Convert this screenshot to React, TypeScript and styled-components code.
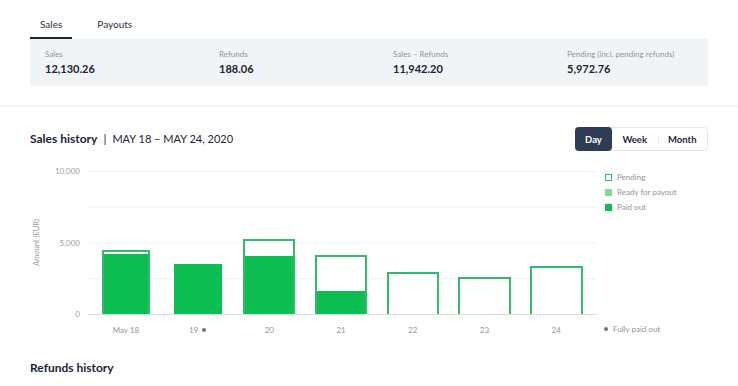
import React from "react";
import styled, { createGlobalStyle } from "styled-components";

const GlobalStyle = createGlobalStyle`
  body {
    margin: 0;
    background: #fff;
    font-family: Lato, "Noto Sans", sans-serif;
    color: #1b2335;
  }
`;

const GREEN = "#0dbf53";
const OUTLINE = "#33b96b";
const MAX = 10000;
const PLOT_H = 143;

type Day = { label: string; total: number; paid: number; w: number; dot?: boolean };

const days: Day[] = [
  { label: "May 18", total: 4480, paid: 4200, w: 48 },
  { label: "19", total: 3500, paid: 3500, w: 48, dot: true },
  { label: "20", total: 5280, paid: 4040, w: 52 },
  { label: "21", total: 4130, paid: 1610, w: 52 },
  { label: "22", total: 2920, paid: 0, w: 52 },
  { label: "23", total: 2570, paid: 0, w: 53 },
  { label: "24", total: 3340, paid: 0, w: 53 },
];

const stats = [
  { label: "Sales", value: "12,130.26" },
  { label: "Refunds", value: "188.06" },
  { label: "Sales – Refunds", value: "11,942.20" },
  { label: "Pending (incl. pending refunds)", value: "5,972.76" },
];

const Top = styled.div`
  padding: 0 30px;
  margin-bottom: 19px;
`;

const TabBar = styled.div`
  display: flex;
  gap: 15px;
`;

const Tab = styled.div<{ $active?: boolean }>`
  padding: 17px 10px 6px;
  font-size: 10px;
  line-height: 14px;
  color: #2a3142;
  border-bottom: 2px solid ${(p) => (p.$active ? "#1b2335" : "transparent")};
`;

const StatsPanel = styled.div`
  display: grid;
  grid-template-columns: repeat(4, 174px);
  padding: 10px 15px;
  background: #f1f4f7;
  border-radius: 0 0 3px 3px;
`;

const StatLabel = styled.div`
  font-size: 8px;
  line-height: 10px;
  color: #8d94a1;
  margin-bottom: 2px;
`;

const StatValue = styled.div`
  font-size: 11px;
  line-height: 15px;
  font-weight: 700;
  color: #1b2335;
`;

const Divider = styled.div`
  height: 2px;
  background: #f1f3f5;
`;

const Main = styled.div`
  padding: 20px 30px 0;
`;

const Header = styled.div`
  display: flex;
  justify-content: space-between;
  align-items: center;
`;

const Title = styled.h2`
  margin: 0;
  font-size: 12px;
  line-height: 16px;
  font-weight: 700;
  color: #1b2335;
`;

const Range = styled.span`
  font-weight: 400;
  font-size: 11px;
  &::before {
    content: "|";
    font-size: 12px;
    margin: 0 6px 0 6px;
  }
`;

const Segmented = styled.div`
  display: flex;
  align-items: stretch;
  height: 24px;
  box-sizing: border-box;
  border: 1px solid #e3e6eb;
  border-radius: 4px;
`;

const SegButton = styled.div<{ $active?: boolean; $sep?: boolean }>`
  position: relative;
  display: flex;
  align-items: center;
  padding: 0 ${(p) => (p.$active ? 10 : 10.5)}px;
  margin: ${(p) => (p.$active ? "-1px 0 -1px -1px" : "0")};
  font-size: 9.5px;
  font-weight: 700;
  border-radius: ${(p) => (p.$active ? "4px" : "0")};
  background: ${(p) => (p.$active ? "#2f3c56" : "transparent")};
  color: ${(p) => (p.$active ? "#fff" : "#1f2738")};
  &::before {
    content: "";
    display: ${(p) => (p.$sep ? "block" : "none")};
    position: absolute;
    left: 0;
    top: 7px;
    height: 9px;
    width: 1px;
    background: #e6e8ec;
  }
`;

const Chart = styled.div`
  display: grid;
  grid-template-columns: 12px 30px 509px 1fr;
  grid-template-rows: ${PLOT_H + 1}px auto;
  column-gap: 8px;
  margin-top: 20px;
`;

const AxisTitle = styled.div`
  grid-row: 1;
  display: flex;
  align-items: center;
  justify-content: center;
  writing-mode: vertical-rl;
  transform: rotate(180deg);
  font-size: 7.5px;
  color: #979dab;
  white-space: nowrap;
`;

const Ticks = styled.div`
  grid-row: 1;
  display: flex;
  flex-direction: column;
  justify-content: space-between;
  align-items: flex-end;
  margin: -5px 0 -4px;
`;

const Tick = styled.span`
  font-size: 8px;
  line-height: 10px;
  color: #979dab;
`;

const Plot = styled.div`
  grid-row: 1;
  display: flex;
  align-items: flex-end;
  padding: 0 5px 0 2px;
  border-bottom: 1px solid #d9dce1;
  background-image: linear-gradient(#eef0f3 1px, transparent 1px);
  background-size: 100% 25%;
`;

const Column = styled.div`
  flex: 1;
  display: flex;
  justify-content: center;
  align-items: flex-end;
  height: 100%;
`;

const Bar = styled.div<{ $outlined: boolean }>`
  display: flex;
  flex-direction: column;
  justify-content: flex-end;
  box-sizing: border-box;
  background: #fff;
  border: ${(p) => (p.$outlined ? `2px solid ${OUTLINE}` : "none")};
  border-bottom: none;
`;

const Fill = styled.div`
  background: ${GREEN};
`;

const Legend = styled.div`
  grid-row: 1;
  display: flex;
  flex-direction: column;
  gap: 5px;
  padding-top: 1px;
`;

const LegendItem = styled.div`
  display: flex;
  align-items: center;
  gap: 5px;
  font-size: 8px;
  line-height: 10px;
  color: #8d94a1;
`;

const Swatch = styled.span<{ $kind: "pending" | "ready" | "paid" }>`
  width: 7px;
  height: 7px;
  box-sizing: border-box;
  background: ${(p) => (p.$kind === "pending" ? "#fff" : p.$kind === "ready" ? "#7fd8a1" : GREEN)};
  border: 1.2px solid ${(p) => (p.$kind === "pending" ? OUTLINE : "transparent")};
`;

const XLabels = styled.div`
  grid-column: 3;
  grid-row: 2;
  display: flex;
  padding: 10px 5px 0 2px;
`;

const XLabel = styled.div`
  flex: 1;
  display: flex;
  justify-content: center;
  align-items: center;
  gap: 4px;
  font-size: 8px;
  line-height: 10px;
  color: #8d94a1;
`;

const Dot = styled.span`
  width: 4px;
  height: 4px;
  border-radius: 50%;
  background: #6c7383;
`;

const FootLegend = styled(LegendItem)`
  grid-column: 4;
  grid-row: 2;
  padding-top: 9px;
  gap: 5px;
  margin-left: -1px;
  align-self: start;
`;

const SubTitle = styled(Title)`
  margin-top: 25px;
`;

const px = (v: number) => Math.round((v / MAX) * PLOT_H * 10) / 10;

export default function App() {
  return (
    <>
      <GlobalStyle />
      <Top>
        <TabBar>
          <Tab $active>Sales</Tab>
          <Tab>Payouts</Tab>
        </TabBar>
        <StatsPanel>
          {stats.map((s) => (
            <div key={s.label}>
              <StatLabel>{s.label}</StatLabel>
              <StatValue>{s.value}</StatValue>
            </div>
          ))}
        </StatsPanel>
      </Top>
      <Divider />
      <Main>
        <Header>
          <Title>
            Sales history<Range>MAY 18 – MAY 24, 2020</Range>
          </Title>
          <Segmented>
            <SegButton $active>Day</SegButton>
            <SegButton>Week</SegButton>
            <SegButton $sep>Month</SegButton>
          </Segmented>
        </Header>
        <Chart>
          <AxisTitle>Amount (EUR)</AxisTitle>
          <Ticks>
            <Tick>10,000</Tick>
            <Tick>5,000</Tick>
            <Tick>0</Tick>
          </Ticks>
          <Plot>
            {days.map((d) => (
              <Column key={d.label}>
                <Bar $outlined={d.total > d.paid} style={{ width: d.w, height: px(d.total) }}>
                  {d.paid > 0 && <Fill style={{ height: px(d.paid) }} />}
                </Bar>
              </Column>
            ))}
          </Plot>
          <Legend>
            <LegendItem>
              <Swatch $kind="pending" />
              Pending
            </LegendItem>
            <LegendItem>
              <Swatch $kind="ready" />
              Ready for payout
            </LegendItem>
            <LegendItem>
              <Swatch $kind="paid" />
              Paid out
            </LegendItem>
          </Legend>
          <XLabels>
            {days.map((d) => (
              <XLabel key={d.label}>
                {d.label}
                {d.dot && <Dot />}
              </XLabel>
            ))}
          </XLabels>
          <FootLegend>
            <Dot />
            Fully paid out
          </FootLegend>
        </Chart>
        <SubTitle>Refunds history</SubTitle>
      </Main>
    </>
  );
}
